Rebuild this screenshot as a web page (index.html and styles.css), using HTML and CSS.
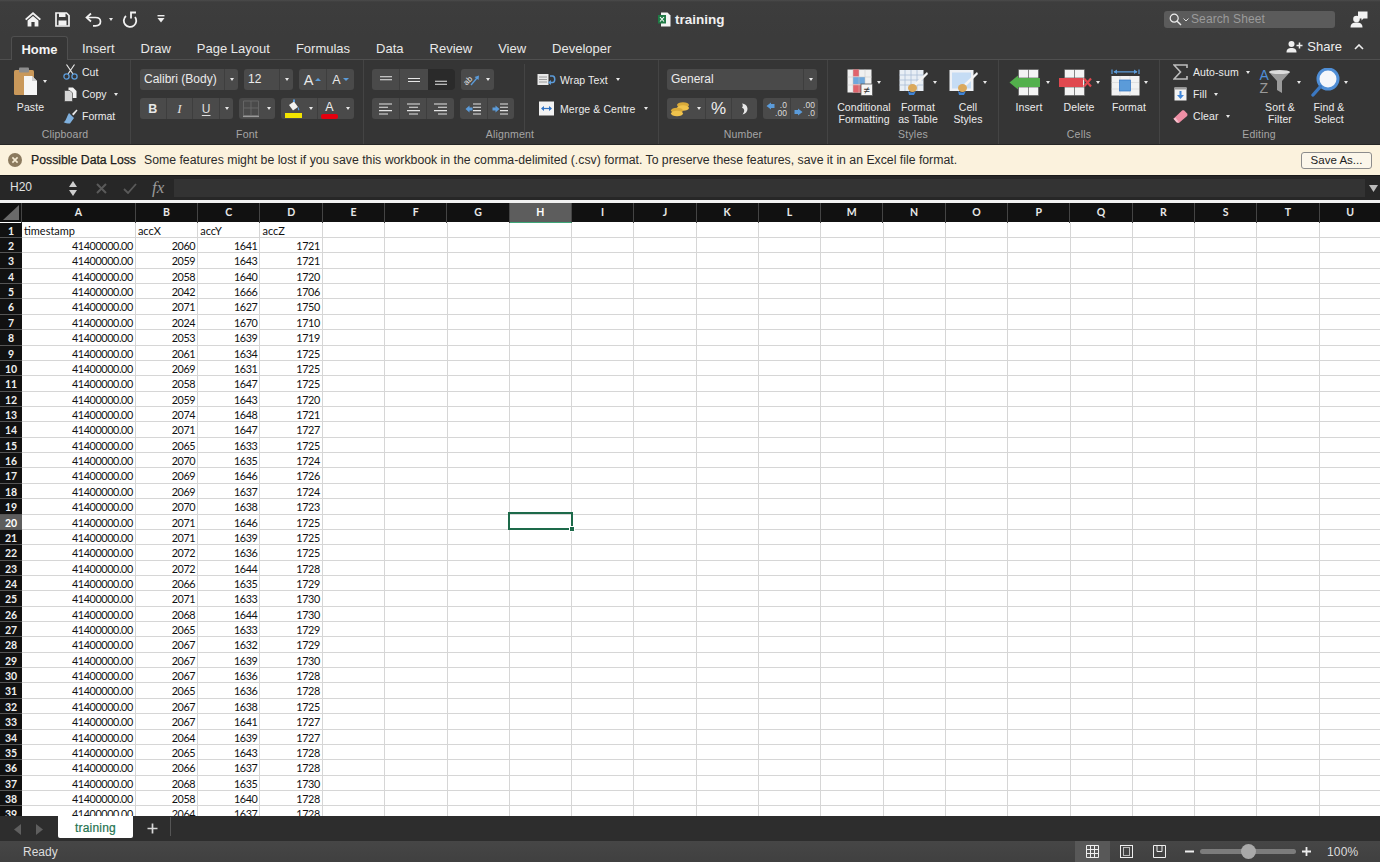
FILE: index.html
```html
<!DOCTYPE html>
<html lang="en">
<head>
<meta charset="utf-8">
<title>training</title>
<link rel="stylesheet" href="styles.css">
</head>
<body>
<div class="app">
  <header class="titlebar">
    <div class="qat">
      <svg class="q-home" width="18" height="16" viewBox="0 0 18 16"><path d="M9 1 L17 8 L15.6 9.3 L9 3.6 L2.4 9.3 L1 8Z" fill="#f2f2f2"/><path d="M3.6 9.6 L9 5 L14.4 9.6 V15.5 H10.6 V11 H7.4 V15.5 H3.6Z" fill="#f2f2f2"/></svg>
      <svg class="q-save" width="15" height="15" viewBox="0 0 15 15"><path d="M1 1 H11.5 L14 3.5 V14 H1Z" fill="none" stroke="#f2f2f2" stroke-width="1.7"/><rect x="4" y="1" width="6.5" height="4" fill="#f2f2f2"/><rect x="3.5" y="8.5" width="8" height="5" fill="#f2f2f2"/></svg>
      <svg class="q-undo" width="17" height="15" viewBox="0 0 17 15"><path d="M6 1.5 L1.5 5.5 L6 9.5" fill="none" stroke="#f2f2f2" stroke-width="1.7"/><path d="M2 5.5 H10.5 C14.5 5.5 15.5 8 15.5 9.5 C15.5 12 13.5 13.8 10.5 13.8 H8" fill="none" stroke="#f2f2f2" stroke-width="1.7"/></svg>
      <span class="caret q-caret"></span>
      <svg class="q-redo" width="16" height="17" viewBox="0 0 16 17"><path d="M4 5 A6.2 6.2 0 1 0 13 6" fill="none" stroke="#f2f2f2" stroke-width="1.8"/><path d="M14 1.5 H9 V7.5" fill="none" stroke="#f2f2f2" stroke-width="1.8"/></svg>
      <svg class="q-more" width="8" height="8" viewBox="0 0 8 8"><rect x="0.5" y="0" width="7" height="1.4" fill="#eee"/><path d="M0.5 3 H7.5 L4 7.5Z" fill="#eee"/></svg>
    </div>
    <div class="doc">
      <svg width="13" height="15" viewBox="0 0 13 15"><path d="M3 0.5 H9.5 L12.5 3.5 V14.5 H3Z" fill="#f4f4f4"/><rect x="0" y="3" width="8" height="8.5" fill="#1f7a45"/><path d="M2 5 L6 9.5 M6 5 L2 9.5" stroke="#fff" stroke-width="1.1"/></svg>
      <span class="doc-name">training</span>
    </div>
    <div class="search">
      <svg width="13" height="13" viewBox="0 0 13 13"><circle cx="5.2" cy="5.2" r="4" fill="none" stroke="#eee" stroke-width="1.2"/><path d="M8.2 8.2 L12 12" stroke="#eee" stroke-width="1.4"/></svg>
      <svg class="chev" width="6" height="4" viewBox="0 0 6 4"><path d="M0.5 0.5 L3 3 L5.5 0.5" fill="none" stroke="#ddd" stroke-width="1"/></svg>
      <span>Search Sheet</span>
    </div>
    <svg class="people" width="18" height="17" viewBox="0 0 18 17"><path d="M8 0.5 H17.5 V7.5 H13.5 L11.5 9.5 V7.5 H8Z" fill="#f2f2f2"/><circle cx="6.5" cy="8" r="3.3" fill="#f2f2f2"/><path d="M0.5 16.5 C0.5 12.5 3 11.5 6.5 11.5 C10 11.5 12.5 12.5 12.5 16.5Z" fill="#f2f2f2"/></svg>
  </header>

  <nav class="tabs">
    <span class="tab active">Home</span>
    <span class="tab">Insert</span>
    <span class="tab">Draw</span>
    <span class="tab">Page Layout</span>
    <span class="tab">Formulas</span>
    <span class="tab">Data</span>
    <span class="tab">Review</span>
    <span class="tab">View</span>
    <span class="tab">Developer</span>
    <span class="share">
      <svg width="17" height="13" viewBox="0 0 17 13"><circle cx="5.5" cy="4" r="3" fill="#eee"/><path d="M0.5 12.5 C0.5 9 2.5 8 5.5 8 C8.5 8 10.5 9 10.5 12.5Z" fill="#eee"/><path d="M10.5 5.5 H16.5 M13.5 2.5 V8.5" stroke="#eee" stroke-width="1.5"/></svg>
      Share
      <svg class="collapse" width="10" height="6" viewBox="0 0 10 6"><path d="M1 5 L5 1 L9 5" fill="none" stroke="#eee" stroke-width="1.6"/></svg>
    </span>
  </nav>

  <section class="ribbon">
    <div class="group g-clip">
      <div class="body clip-body">
        <div class="paste">
          <div class="paste-top">
            <svg width="25" height="29" viewBox="0 0 25 29"><rect x="1" y="3" width="20" height="25" rx="1.5" fill="#c9985a"/><rect x="6" y="0.5" width="10" height="5" rx="1" fill="#8d8d8d"/><path d="M11 9 H19 L24 14 V28 H11Z" fill="#f6f6f6"/><path d="M19 9 V14 H24" fill="#cfcfcf"/></svg>
            <span class="caret"></span>
          </div>
          <span class="lbl">Paste</span>
        </div>
        <div class="clip-list">
          <div class="clip-item">
            <svg width="15" height="16" viewBox="0 0 15 16"><path d="M3.5 0.5 L10 10 M11.5 0.5 L5 10" stroke="#e5e5e5" stroke-width="1.2"/><circle cx="3.5" cy="12.5" r="2.6" fill="none" stroke="#5b9bd9" stroke-width="1.3"/><circle cx="11.5" cy="12.5" r="2.6" fill="none" stroke="#5b9bd9" stroke-width="1.3"/></svg>
            <span>Cut</span>
          </div>
          <div class="clip-item">
            <svg width="13" height="15" viewBox="0 0 13 15"><path d="M4.5 0.5 H9 L12.5 4 V11 H4.5Z" fill="#f2f2f2"/><path d="M0.5 3.5 H6 L8.5 6 V14.5 H0.5Z" fill="#d6d6d6" stroke="#333" stroke-width="0.6"/></svg>
            <span>Copy</span><span class="caret"></span>
          </div>
          <div class="clip-item">
            <svg width="15" height="15" viewBox="0 0 15 15"><path d="M9 5 L13.5 0.5 L14.5 1.5 L10.5 6.5Z" fill="#e9e9e9"/><path d="M6 4 L11 9 L7 14.5 C4 14.5 2 14 0.5 13 C3 12.5 3.5 8 6 4Z" fill="#7fb0dd"/></svg>
            <span>Format</span>
          </div>
        </div>
      </div>
      <div class="glabel">Clipboard</div>
    </div>

    <div class="group g-font">
      <div class="body rows">
        <div class="row">
          <div class="seg w-fontname"><span class="seg-text grow">Calibri (Body)</span><span class="divider"></span><span class="caret-box"><span class="caret"></span></span></div>
          <div class="seg w-fontsize"><span class="seg-text grow">12</span><span class="divider"></span><span class="caret-box"><span class="caret"></span></span></div>
          <div class="seg w-grow">
            <span class="cell-btn"><span class="big-a">A</span><span class="tri-up"></span></span>
            <span class="divider"></span>
            <span class="cell-btn"><span class="small-a">A</span><span class="tri-down"></span></span>
          </div>
        </div>
        <div class="row">
          <div class="seg w-biu">
            <span class="cell-btn b">B</span><span class="divider"></span>
            <span class="cell-btn i">I</span><span class="divider"></span>
            <span class="cell-btn u">U</span><span class="divider"></span>
            <span class="caret-box"><span class="caret"></span></span>
          </div>
          <div class="seg w-border">
            <span class="cell-btn">
              <svg width="18" height="18" viewBox="0 0 18 18"><path d="M1.5 1 V15 M16.5 1 V15 M1.5 1 H16.5 M1.5 8 H16.5 M9 1 V15" fill="none" stroke="#696969" stroke-width="0.9"/><rect x="1" y="15.5" width="16" height="1.6" fill="#9a9a9a"/></svg>
            </span>
            <span class="caret-box"><span class="caret"></span></span>
          </div>
          <div class="seg w-color">
            <span class="cell-btn">
              <svg width="18" height="19" viewBox="0 0 18 19"><path d="M5 6 L10 2.5 L14 8 L9 11.5Z" fill="#f2f2f2"/><path d="M10 3 V0.5" stroke="#5b9bd9" stroke-width="2"/><path d="M14 8 C15.5 9 15.5 11 15 11.5 C14 11.5 13.5 10 14 8Z" fill="#5b9bd9"/><rect x="1" y="14" width="17" height="5" fill="#f2e400"/></svg>
            </span>
            <span class="caret-box"><span class="caret"></span></span>
            <span class="divider"></span>
            <span class="cell-btn color-a"><span class="a-letter">A</span><span class="red-bar"></span></span>
            <span class="caret-box"><span class="caret"></span></span>
          </div>
        </div>
      </div>
      <div class="glabel">Font</div>
    </div>

    <div class="group g-align">
      <div class="body align-body">
        <div class="rows">
          <div class="row">
            <div class="seg w-valign">
              <span class="cell-btn"><svg width="14" height="8" viewBox="0 0 14 8"><path d="M1 0.7 H13 M1 3.7 H13" stroke="#e8e8e8" stroke-width="1.1"/></svg></span>
              <span class="divider"></span>
              <span class="cell-btn"><svg width="14" height="8" viewBox="0 0 14 8"><path d="M1 2.5 H13 M1 5.5 H13" stroke="#e8e8e8" stroke-width="1.1"/></svg></span>
              <span class="cell-btn dark"><svg class="lower" width="14" height="8" viewBox="0 0 14 8"><path d="M1 4.3 H13 M1 7.3 H13" stroke="#e8e8e8" stroke-width="1.1"/></svg></span>
            </div>
            <div class="seg w-orient">
              <span class="cell-btn"><svg width="20" height="18" viewBox="0 0 20 18"><text x="2" y="12" class="ab" transform="rotate(-45 7 9)">ab</text><path d="M10 14 L16 7" stroke="#5b9bd9" stroke-width="1.3"/><path d="M13.5 6 L18 4.5 L17.5 9Z" fill="#5b9bd9"/></svg></span>
              <span class="caret-box"><span class="caret"></span></span>
            </div>
          </div>
          <div class="row">
            <div class="seg w-halign">
              <span class="cell-btn"><svg width="15" height="12" viewBox="0 0 15 12"><path d="M1 1 H14 M1 4.3 H10 M1 7.6 H14 M1 11 H10" stroke="#e4e4e4" stroke-width="1.1"/></svg></span>
              <span class="divider"></span>
              <span class="cell-btn"><svg width="15" height="12" viewBox="0 0 15 12"><path d="M1 1 H14 M3 4.3 H12 M1 7.6 H14 M3 11 H12" stroke="#e4e4e4" stroke-width="1.1"/></svg></span>
              <span class="divider"></span>
              <span class="cell-btn"><svg width="15" height="12" viewBox="0 0 15 12"><path d="M1 1 H14 M5 4.3 H14 M1 7.6 H14 M5 11 H14" stroke="#e4e4e4" stroke-width="1.1"/></svg></span>
            </div>
            <div class="seg w-indent">
              <span class="cell-btn"><svg width="17" height="12" viewBox="0 0 17 12"><path d="M8 1 H16 M8 4.3 H16 M8 7.6 H16 M8 11 H16" stroke="#e4e4e4" stroke-width="1.1"/><path d="M0.5 6 L4.5 2.5 V4.5 H7.5 V7.5 H4.5 V9.5Z" fill="#5b9bd9"/></svg></span>
              <span class="divider"></span>
              <span class="cell-btn"><svg width="17" height="12" viewBox="0 0 17 12"><path d="M8 1 H16 M8 4.3 H16 M8 7.6 H16 M8 11 H16" stroke="#e4e4e4" stroke-width="1.1"/><path d="M7.5 6 L3.5 2.5 V4.5 H0.5 V7.5 H3.5 V9.5Z" fill="#5b9bd9"/></svg></span>
            </div>
          </div>
        </div>
        <div class="wrap-col">
          <div class="wrap-item">
            <svg width="19" height="13" viewBox="0 0 19 13"><rect x="0.5" y="1" width="11" height="11" fill="#e8e8e8"/><path d="M2 4 H10 M2 6.5 H10 M2 9 H10" stroke="#888" stroke-width="0.8"/><path d="M13 3 H15.5 C18.5 3 18.5 9.5 15.5 9.5 H12" fill="none" stroke="#5b9bd9" stroke-width="1.5"/><path d="M14 7 L11 9.5 L14 12Z" fill="#5b9bd9"/></svg>
            <span>Wrap Text</span><span class="caret"></span>
          </div>
          <div class="wrap-item">
            <svg width="19" height="15" viewBox="0 0 19 15"><rect x="2" y="0.5" width="15" height="14" fill="#f2f2f2"/><path d="M5 7.5 H14" stroke="#2f72c4" stroke-width="1.2"/><path d="M7 5 L4 7.5 L7 10Z M12 5 L15 7.5 L12 10Z" fill="#2f72c4"/></svg>
            <span>Merge &amp; Centre</span><span class="caret"></span>
          </div>
        </div>
      </div>
      <div class="glabel">Alignment</div>
    </div>

    <div class="group g-num">
      <div class="body rows">
        <div class="row"><div class="seg w-general"><span class="seg-text grow">General</span><span class="divider"></span><span class="caret-box"><span class="caret"></span></span></div></div>
        <div class="row">
          <div class="seg w-money">
            <span class="cell-btn">
              <svg width="20" height="16" viewBox="0 0 20 16"><ellipse cx="13" cy="4" rx="6" ry="2.8" fill="#d9aa3a"/><ellipse cx="13" cy="7" rx="6" ry="2.8" fill="#f0c34c"/><ellipse cx="7" cy="9.5" rx="6" ry="2.8" fill="#d9aa3a"/><ellipse cx="7" cy="12.5" rx="6" ry="2.8" fill="#f0c34c"/></svg>
            </span>
            <span class="caret-box"><span class="caret"></span></span>
            <span class="divider"></span>
            <span class="cell-btn pct">%</span>
            <span class="divider"></span>
            <span class="cell-btn">
              <svg width="7" height="12" viewBox="0 0 7 12"><path d="M1 0.5 C5 1 6.5 3.5 6.5 6 C6.5 8.5 4.5 11 1.5 11.5 C3 9.5 3.5 8 3 6.5 C2.5 5.5 1.5 5 1 4.5 C2 3.5 2 2 1 0.5Z" fill="#e8e8e8"/></svg>
            </span>
          </div>
          <div class="seg w-dec">
            <span class="cell-btn dec">
              <svg class="dec-up" width="9" height="8" viewBox="0 0 9 8"><path d="M0.5 4 L5 0.5 V2 H8.5 V6 H5 V7.5Z" fill="#5b9bd9"/></svg>
              <span class="dec-t"><i>.0</i><i>.00</i></span>
            </span>
            <span class="divider"></span>
            <span class="cell-btn dec">
              <span class="dec-t"><i>.00</i><i>.0</i></span>
              <svg class="dec-r" width="9" height="8" viewBox="0 0 9 8"><path d="M8.5 4 L4 0.5 V2 H0.5 V6 H4 V7.5Z" fill="#5b9bd9"/></svg>
            </span>
          </div>
        </div>
      </div>
      <div class="glabel">Number</div>
    </div>

    <div class="group g-styles">
      <div class="body bigs">
        <div class="big b-cond">
          <div class="big-icon">
            <svg width="26" height="27" viewBox="0 0 26 27"><rect x="0.5" y="0.5" width="24" height="23" fill="#f0f0f0"/><rect x="6" y="0.5" width="6" height="7" fill="#e0646c"/><rect x="6" y="8" width="12" height="7" fill="#6fa8dc"/><rect x="6" y="15.5" width="9" height="8" fill="#e0646c"/><path d="M6 0.5 V24 M12 0.5 V24 M18 0.5 V24 M0.5 8 H25 M0.5 16 H25" stroke="#c4c4c4" stroke-width="0.5"/><rect x="14" y="15" width="11.5" height="11.5" fill="#f6f6f6" stroke="#555" stroke-width="0.8"/><text x="16.5" y="24.5" class="neq">≠</text></svg>
            <span class="caret"></span>
          </div>
          <span class="lbl">Conditional<br>Formatting</span>
        </div>
        <div class="big b-table">
          <div class="big-icon">
            <svg width="30" height="27" viewBox="0 0 30 27"><rect x="0.5" y="1" width="24" height="21" fill="#e8eef5"/><path d="M0.5 6 H24 M0.5 11 H24 M0.5 16 H24 M6 1 V22 M12 1 V22 M18 1 V22" stroke="#a9bdd6" stroke-width="0.8"/><path d="M28 3 L15 15 L17 17 L29 5Z" fill="#f4f4f4"/><ellipse cx="13.5" cy="19" rx="4.5" ry="4" fill="#dba95c"/><path d="M9 22 C12 24 14 24 17 22 L15 26 H10Z" fill="#3f85d8"/></svg>
            <span class="caret"></span>
          </div>
          <span class="lbl">Format<br>as Table</span>
        </div>
        <div class="big b-cell">
          <div class="big-icon">
            <svg width="30" height="27" viewBox="0 0 30 27"><rect x="0.5" y="1" width="24" height="21" fill="#eef1f5"/><rect x="3" y="3.5" width="19" height="16" fill="#c5dcf4"/><path d="M28 3 L15 15 L17 17 L29 5Z" fill="#f4f4f4"/><ellipse cx="13.5" cy="19" rx="4.5" ry="4" fill="#dba95c"/><path d="M9 22 C12 24 14 24 17 22 L15 26 H10Z" fill="#3f85d8"/></svg>
            <span class="caret"></span>
          </div>
          <span class="lbl">Cell<br>Styles</span>
        </div>
      </div>
      <div class="glabel">Styles</div>
    </div>

    <div class="group g-cells">
      <div class="body bigs">
        <div class="big b-ins">
          <div class="big-icon">
            <svg width="33" height="27" viewBox="0 0 33 27"><rect x="9.5" y="0.5" width="20" height="26" fill="#f3f3f3" stroke="#555" stroke-width="0.6"/><path d="M19.5 0.5 V27 M9.5 9 H30 M9.5 18 H30" stroke="#555" stroke-width="0.7"/><rect x="9" y="9" width="22" height="9" fill="#53b04c"/><path d="M0.5 13.5 L9 6.5 V20.5Z" fill="#53b04c"/></svg>
            <span class="caret"></span>
          </div>
          <span class="lbl">Insert</span>
        </div>
        <div class="big b-del">
          <div class="big-icon">
            <svg width="34" height="27" viewBox="0 0 34 27"><rect x="6.5" y="0.5" width="20" height="26" fill="#f3f3f3" stroke="#555" stroke-width="0.6"/><path d="M16.5 0.5 V27 M6.5 9 H27 M6.5 18 H27" stroke="#555" stroke-width="0.7"/><rect x="1" y="9" width="24" height="9" fill="#e0484f"/><path d="M26 9.5 L33 17.5 M33 9.5 L26 17.5" stroke="#e0484f" stroke-width="2.2"/></svg>
            <span class="caret"></span>
          </div>
          <span class="lbl">Delete</span>
        </div>
        <div class="big b-fmt">
          <div class="big-icon">
            <svg width="29" height="27" viewBox="0 0 29 27"><path d="M1 0.5 V5 M28 0.5 V5 M3 2.8 H26" stroke="#5b9bd9" stroke-width="1.2"/><path d="M6 0.5 L2.5 2.8 L6 5Z M23 0.5 L26.5 2.8 L23 5Z" fill="#5b9bd9"/><rect x="0.5" y="7" width="28" height="19.5" fill="#f2f2f2"/><path d="M9 7 V27 M19 7 V27 M0.5 13.5 H28 M0.5 20 H28" stroke="#d4d4d4" stroke-width="0.6"/><rect x="8.5" y="11" width="11" height="11" fill="#5b9bd9" stroke="#2f72c4" stroke-width="0.7"/></svg>
            <span class="caret"></span>
          </div>
          <span class="lbl">Format</span>
        </div>
      </div>
      <div class="glabel">Cells</div>
    </div>

    <div class="group g-edit">
      <div class="body edit-body">
        <div class="edit-list">
          <div class="edit-item">
            <svg width="15" height="16" viewBox="0 0 15 16"><path d="M14 4 V1 H1 L7.5 8 L1 15 H14 V12" fill="none" stroke="#bdbdbd" stroke-width="1.6"/></svg>
            <span>Auto-sum</span><span class="caret"></span>
          </div>
          <div class="edit-item">
            <svg width="15" height="14" viewBox="0 0 15 14"><rect x="1.5" y="0.5" width="12" height="13" fill="#f2f2f2"/><rect x="1.5" y="0.5" width="12" height="2" fill="#9a9a9a"/><path d="M7.5 4 V9" stroke="#3f85d8" stroke-width="2"/><path d="M4 8 H11 L7.5 12Z" fill="#3f85d8"/></svg>
            <span>Fill</span><span class="caret"></span>
          </div>
          <div class="edit-item">
            <svg width="17" height="15" viewBox="0 0 17 15"><path d="M0.5 10 L10 1 C11 0.3 12 0.3 13 1 L16 4 C16.6 5 16.6 6 16 7 L7 14.5 C6 14.8 5 14.8 4 14 Z" fill="#ef8fa5"/><path d="M0.5 10 L4 14 L7 14.5 L3 9Z" fill="#f6c2ce"/></svg>
            <span>Clear</span><span class="caret"></span>
          </div>
        </div>
        <div class="big b-sort">
          <div class="big-icon">
            <svg width="34" height="28" viewBox="0 0 34 28"><text x="0.5" y="11.5" class="az-a">A</text><text x="0.5" y="25" class="az-z">Z</text><path d="M10 4 H31 L23 13 V25 L18 22 V13Z" fill="#9b9b9b"/><ellipse cx="20.5" cy="4" rx="10.5" ry="2" fill="#dcdcdc"/></svg>
            <span class="caret"></span>
          </div>
          <span class="lbl">Sort &amp;<br>Filter</span>
        </div>
        <div class="big b-find">
          <div class="big-icon">
            <svg width="29" height="29" viewBox="0 0 29 29"><circle cx="17" cy="11" r="10" fill="#f4f6fa" stroke="#4f8ed6" stroke-width="3"/><path d="M9.5 18.5 L2 27" stroke="#3b78c2" stroke-width="3.4" stroke-linecap="round"/></svg>
            <span class="caret"></span>
          </div>
          <span class="lbl">Find &amp;<br>Select</span>
        </div>
      </div>
      <div class="glabel">Editing</div>
    </div>
  </section>

  <section class="msgbar">
    <svg width="14" height="14" viewBox="0 0 14 14"><circle cx="7" cy="7" r="7" fill="#8b7a5e"/><path d="M4.4 4.4 L9.6 9.6 M9.6 4.4 L4.4 9.6" stroke="#f6ecd4" stroke-width="1.6"/></svg>
    <b class="msg-title">Possible Data Loss</b>
    <span class="msg-text">Some features might be lost if you save this workbook in the comma-delimited (.csv) format. To preserve these features, save it in an Excel file format.</span>
    <span class="msg-btn">Save As...</span>
  </section>

  <section class="fbar">
    <span class="namebox">H20</span>
    <svg class="stepper" width="8" height="17" viewBox="0 0 8 17"><path d="M4 1 L8 7 H0Z" fill="#cfcfcf"/><path d="M4 16 L8 10 H0Z" fill="#cfcfcf"/></svg>
    <svg class="f-x" width="11" height="11" viewBox="0 0 11 11"><path d="M1 1 L10 10 M10 1 L1 10" stroke="#5a5a5a" stroke-width="2"/></svg>
    <svg class="f-c" width="14" height="11" viewBox="0 0 14 11"><path d="M1 6 L5 10 L13 1" fill="none" stroke="#5a5a5a" stroke-width="1.8"/></svg>
    <span class="fx">fx</span>
    <div class="finput"></div>
    <svg class="f-drop" width="9" height="7" viewBox="0 0 9 7"><path d="M0 0 H9 L4.5 7Z" fill="#bbb"/></svg>
  </section>

  <main class="sheet">
    <div class="colhead">
      <span class="corner"><svg width="20" height="19" viewBox="0 0 20 19"><path d="M19 2 V17 H3Z" fill="#6a6a6a"/></svg></span>
      <span>A</span><span>B</span><span>C</span><span>D</span><span>E</span><span>F</span><span>G</span><span class="sel">H</span><span>I</span><span>J</span><span>K</span><span>L</span><span>M</span><span>N</span><span>O</span><span>P</span><span>Q</span><span>R</span><span>S</span><span>T</span><span>U</span>
    </div>
    <div class="rowsgrid">
      <div class="r"><b>1</b><span class="t">timestamp</span><span class="t">accX</span><span class="t">accY</span><span class="t">accZ</span><span class="rest"></span></div>
      <div class="r"><b>2</b><span>41400000.00</span><span>2060</span><span>1641</span><span>1721</span><span class="rest"></span></div>
      <div class="r"><b>3</b><span>41400000.00</span><span>2059</span><span>1643</span><span>1721</span><span class="rest"></span></div>
      <div class="r"><b>4</b><span>41400000.00</span><span>2058</span><span>1640</span><span>1720</span><span class="rest"></span></div>
      <div class="r"><b>5</b><span>41400000.00</span><span>2042</span><span>1666</span><span>1706</span><span class="rest"></span></div>
      <div class="r"><b>6</b><span>41400000.00</span><span>2071</span><span>1627</span><span>1750</span><span class="rest"></span></div>
      <div class="r"><b>7</b><span>41400000.00</span><span>2024</span><span>1670</span><span>1710</span><span class="rest"></span></div>
      <div class="r"><b>8</b><span>41400000.00</span><span>2053</span><span>1639</span><span>1719</span><span class="rest"></span></div>
      <div class="r"><b>9</b><span>41400000.00</span><span>2061</span><span>1634</span><span>1725</span><span class="rest"></span></div>
      <div class="r"><b>10</b><span>41400000.00</span><span>2069</span><span>1631</span><span>1725</span><span class="rest"></span></div>
      <div class="r"><b>11</b><span>41400000.00</span><span>2058</span><span>1647</span><span>1725</span><span class="rest"></span></div>
      <div class="r"><b>12</b><span>41400000.00</span><span>2059</span><span>1643</span><span>1720</span><span class="rest"></span></div>
      <div class="r"><b>13</b><span>41400000.00</span><span>2074</span><span>1648</span><span>1721</span><span class="rest"></span></div>
      <div class="r"><b>14</b><span>41400000.00</span><span>2071</span><span>1647</span><span>1727</span><span class="rest"></span></div>
      <div class="r"><b>15</b><span>41400000.00</span><span>2065</span><span>1633</span><span>1725</span><span class="rest"></span></div>
      <div class="r"><b>16</b><span>41400000.00</span><span>2070</span><span>1635</span><span>1724</span><span class="rest"></span></div>
      <div class="r"><b>17</b><span>41400000.00</span><span>2069</span><span>1646</span><span>1726</span><span class="rest"></span></div>
      <div class="r"><b>18</b><span>41400000.00</span><span>2069</span><span>1637</span><span>1724</span><span class="rest"></span></div>
      <div class="r"><b>19</b><span>41400000.00</span><span>2070</span><span>1638</span><span>1723</span><span class="rest"></span></div>
      <div class="r"><b class="sel">20</b><span>41400000.00</span><span>2071</span><span>1646</span><span>1725</span><span class="rest"></span></div>
      <div class="r"><b>21</b><span>41400000.00</span><span>2071</span><span>1639</span><span>1725</span><span class="rest"></span></div>
      <div class="r"><b>22</b><span>41400000.00</span><span>2072</span><span>1636</span><span>1725</span><span class="rest"></span></div>
      <div class="r"><b>23</b><span>41400000.00</span><span>2072</span><span>1644</span><span>1728</span><span class="rest"></span></div>
      <div class="r"><b>24</b><span>41400000.00</span><span>2066</span><span>1635</span><span>1729</span><span class="rest"></span></div>
      <div class="r"><b>25</b><span>41400000.00</span><span>2071</span><span>1633</span><span>1730</span><span class="rest"></span></div>
      <div class="r"><b>26</b><span>41400000.00</span><span>2068</span><span>1644</span><span>1730</span><span class="rest"></span></div>
      <div class="r"><b>27</b><span>41400000.00</span><span>2065</span><span>1633</span><span>1729</span><span class="rest"></span></div>
      <div class="r"><b>28</b><span>41400000.00</span><span>2067</span><span>1632</span><span>1729</span><span class="rest"></span></div>
      <div class="r"><b>29</b><span>41400000.00</span><span>2067</span><span>1639</span><span>1730</span><span class="rest"></span></div>
      <div class="r"><b>30</b><span>41400000.00</span><span>2067</span><span>1636</span><span>1728</span><span class="rest"></span></div>
      <div class="r"><b>31</b><span>41400000.00</span><span>2065</span><span>1636</span><span>1728</span><span class="rest"></span></div>
      <div class="r"><b>32</b><span>41400000.00</span><span>2067</span><span>1638</span><span>1725</span><span class="rest"></span></div>
      <div class="r"><b>33</b><span>41400000.00</span><span>2067</span><span>1641</span><span>1727</span><span class="rest"></span></div>
      <div class="r"><b>34</b><span>41400000.00</span><span>2064</span><span>1639</span><span>1727</span><span class="rest"></span></div>
      <div class="r"><b>35</b><span>41400000.00</span><span>2065</span><span>1643</span><span>1728</span><span class="rest"></span></div>
      <div class="r"><b>36</b><span>41400000.00</span><span>2066</span><span>1637</span><span>1728</span><span class="rest"></span></div>
      <div class="r"><b>37</b><span>41400000.00</span><span>2068</span><span>1635</span><span>1730</span><span class="rest"></span></div>
      <div class="r"><b>38</b><span>41400000.00</span><span>2058</span><span>1640</span><span>1728</span><span class="rest"></span></div>
      <div class="r"><b>39</b><span>41400000.00</span><span>2064</span><span>1637</span><span>1728</span><span class="rest"></span></div>
      <div class="selbox"><i></i></div>
    </div>
  </main>

  <section class="sheetbar">
    <svg class="nav-l" width="7" height="11" viewBox="0 0 7 11"><path d="M7 0 V11 L0 5.5Z" fill="#5f5f5f"/></svg>
    <svg class="nav-r" width="7" height="11" viewBox="0 0 7 11"><path d="M0 0 V11 L7 5.5Z" fill="#5f5f5f"/></svg>
    <span class="stab">training</span>
    <svg class="add" width="11" height="11" viewBox="0 0 11 11"><path d="M5.5 0.5 V10.5 M0.5 5.5 H10.5" stroke="#d8d8d8" stroke-width="1.7"/></svg>
    <span class="sb-sep"></span>
  </section>

  <footer class="status">
    <span class="ready">Ready</span>
    <span class="view active">
      <svg width="13" height="13" viewBox="0 0 13 13"><path d="M0.5 0.5 H12.5 V12.5 H0.5Z M4.5 0.5 V12.5 M8.5 0.5 V12.5 M0.5 4.5 H12.5 M0.5 8.5 H12.5" fill="none" stroke="#eee" stroke-width="1"/></svg>
    </span>
    <span class="view">
      <svg width="13" height="13" viewBox="0 0 13 13"><rect x="0.5" y="0.5" width="12" height="12" fill="none" stroke="#eee"/><rect x="3.5" y="2.5" width="6" height="8" fill="none" stroke="#bbb"/></svg>
    </span>
    <span class="view">
      <svg width="13" height="13" viewBox="0 0 13 13"><path d="M0.5 0.5 V12.5 H12.5 V0.5 M0.5 0.5 H12.5 M4 0.5 V6.5 H9 V0.5" fill="none" stroke="#eee"/></svg>
    </span>
    <svg class="zm" width="9" height="3" viewBox="0 0 9 3"><rect width="9" height="2" y="0.5" fill="#eee"/></svg>
    <span class="slider"><i></i></span>
    <svg class="zp" width="9" height="9" viewBox="0 0 9 9"><path d="M4.5 0 V9 M0 4.5 H9" stroke="#eee" stroke-width="1.8"/></svg>
    <span class="zoomval">100%</span>
  </footer>
</div>
</body>
</html>
```
FILE: styles.css
```css
* { box-sizing: border-box; }
html, body { margin: 0; padding: 0; height: 100%; overflow: hidden; }
body { font-family: "Liberation Sans", Arial, sans-serif; color: #eee; background: #333; }
svg { display: block; flex: none; }
.app { width: 1380px; height: 862px; display: flex; flex-direction: column; overflow: hidden; }

.caret { display: inline-block; flex: none; width: 0; height: 0; border-left: 2.5px solid transparent; border-right: 2.5px solid transparent; border-top: 3.5px solid #e8e8e8; }

/* title bar */
.titlebar { height: 36px; padding-top: 2px; display: flex; align-items: center; background: linear-gradient(#4b4b4b 0, #3d3d3d 2px, #3b3b3b 100%); }
.qat { width: 640px; display: flex; align-items: center; padding-left: 24px; }
.q-save { margin-left: 13px; }
.q-undo { margin-left: 15px; }
.q-caret { margin-left: 7px; }
.q-redo { margin-left: 9px; }
.q-more { margin-left: 19px; }
.doc { width: 524px; display: flex; align-items: center; padding-left: 18px; gap: 4px; }
.doc-name { font-size: 13.5px; font-weight: 700; color: #f0f0f0; }
.search { width: 171px; height: 17px; background: #5b5b5b; border-radius: 3px; display: flex; align-items: center; padding-left: 5px; font-size: 12px; color: #9a9a9a; letter-spacing: 0.1px; }
.search .chev { margin: 1px 2px 0 1px; }
.people { margin-left: 15px; }

/* tabs */
.tabs { height: 24px; display: flex; align-items: stretch; padding-left: 11px; background: #3b3b3b; border-bottom: 1px solid #4f4f4f; font-size: 13px; }
.tab { display: flex; align-items: center; padding: 1px 13px 0; color: #e8e8e8; }
.tab.active { font-weight: 700; width: 57px; justify-content: center; padding: 1px 0 0; margin-right: 1px; color: #f4f4f4; background: #353535; border: 1px solid #4f4f4f; border-bottom: 0; border-radius: 3px 3px 0 0; height: 24px; }
.share { margin-left: auto; display: flex; align-items: center; gap: 3px; font-size: 13px; color: #eee; padding-right: 16px; margin-top: -2px; }
.share svg:first-child { margin-right: 1px; }
.collapse { margin-left: 9px; }

/* ribbon */
.ribbon { height: 85px; display: flex; background: #353535; border-bottom: 1px solid #262626; }
.group { display: flex; flex-direction: column; flex: none; padding-top: 9px; border-right: 1px solid #444; }
.body { flex: 1; min-height: 0; }
.glabel { height: 16px; margin-bottom: 2px; text-align: center; font-size: 10.5px; line-height: 16px; color: #a6a6a6; letter-spacing: 0.2px; }
.g-clip { width: 131px; }
.g-font { width: 233px; padding-left: 9px; }
.g-font .glabel { margin-left: -9px; }
.g-align { width: 295px; padding-left: 8px; }
.g-align .glabel { margin-left: -10px; }
.g-num { width: 169px; padding-left: 8px; }
.g-num .glabel { margin-left: -8px; }
.g-styles { width: 171px; }
.g-cells { width: 161px; }
.g-edit { flex: 1; border-right: 0; }
.g-edit .glabel { margin-right: 22px; }
.lbl { display: block; font-size: 10.5px; line-height: 11.5px; color: #ececec; text-align: center; letter-spacing: 0.1px; }

.clip-body { display: flex; padding-left: 13px; margin-top: -3px; }
.paste { width: 38px; }
.paste-top { display: flex; align-items: center; gap: 5px; height: 30px; margin-bottom: 6px; }
.paste .lbl { width: 35px; }
.clip-list { display: flex; flex-direction: column; gap: 6px; margin-left: 12px; margin-top: -2px; }
.clip-item { display: flex; align-items: center; height: 16px; font-size: 10.5px; gap: 4px; color: #ececec; }
.clip-item svg { width: 15px; }
.clip-item .caret { margin-left: 3px; }

.rows { display: flex; flex-direction: column; gap: 8px; }
.row { display: flex; gap: 6px; height: 21px; }
.seg { display: flex; align-items: center; height: 21px; background: #4a4a4a; border-radius: 3px; overflow: hidden; flex: none; }
.seg-text { padding: 0 0 2px 4px; font-size: 12px; color: #ececec; }
.grow { flex: 1; }
.divider { width: 1px; height: 21px; background: #3e3e3e; flex: none; }
.caret-box { width: 13px; height: 21px; display: flex; align-items: center; justify-content: center; flex: none; }
.cell-btn { flex: 1; height: 21px; display: flex; align-items: center; justify-content: center; min-width: 0; }
.cell-btn.dark { background: #2a2a2a; }
.lower { margin-top: 2px; }
.w-fontname { width: 98px; }
.w-fontsize { width: 49px; }
.w-grow { width: 55px; }
.w-biu { width: 93px; }
.w-border { width: 36px; }
.w-color { width: 73px; }
.big-a { font-size: 14.5px; color: #e8e8e8; }
.small-a { font-size: 12.5px; color: #e8e8e8; }
.tri-up { width: 0; height: 0; margin-left: 2px; border-left: 3px solid transparent; border-right: 3px solid transparent; border-bottom: 3px solid #5b9bd9; }
.tri-down { width: 0; height: 0; margin-left: 2px; border-left: 3px solid transparent; border-right: 3px solid transparent; border-top: 3px solid #5b9bd9; }
.b { font-size: 12.5px; font-weight: 700; color: #e8e8e8; }
.i { font-size: 13px; font-style: italic; font-family: "Liberation Serif", serif; color: #e0e0e0; }
.u { font-size: 12px; text-decoration: underline; text-underline-offset: 2px; color: #e0e0e0; }
.color-a { flex-direction: column; justify-content: flex-start; }
.a-letter { font-size: 12.5px; line-height: 14px; margin-top: 2px; color: #eee; }
.red-bar { width: 17px; height: 4.5px; background: #e4000f; border-radius: 2px; }
.ab { font: 8px "Liberation Sans", sans-serif; fill: #e8e8e8; }

.align-body { display: flex; }
.w-valign { width: 83px; }
.w-orient { width: 33px; }
.w-halign { width: 82px; }
.w-indent { width: 54px; }
.wrap-col { margin: -5px 0 0 10px; height: 75px; padding: 5px 0 0 12px; display: flex; flex-direction: column; gap: 8px; border-left: 1px solid #444; }
.wrap-item { display: flex; align-items: center; height: 21px; font-size: 10.5px; gap: 4px; color: #ececec; letter-spacing: 0.1px; white-space: nowrap; }
.wrap-item .caret { margin-left: 4px; }
.w-general { width: 150px; }
.w-money { width: 90px; }
.w-dec { width: 55px; }
.pct { font-size: 17px; color: #eee; }
.dec { gap: 0; align-items: center; }
.dec-t { display: flex; flex-direction: column; font-size: 8.5px; line-height: 8px; color: #dcdcdc; text-align: right; }
.dec-t i { font-style: normal; }
.dec-up { margin: -6px 0 0 0; }
.dec-r { order: -1; margin-top: 6px; }

.bigs { display: flex; margin-top: -1px; }
.big { flex: none; display: flex; flex-direction: column; align-items: center; }
.big-icon { display: flex; align-items: center; height: 28px; gap: 4px; margin-bottom: 6px; }
.b-cond { width: 62px; margin-left: 5px; }
.b-table { width: 46px; }
.b-cell { width: 50px; margin-left: 2px; }
.b-ins { width: 50px; margin-left: 5px; }
.b-del { width: 50px; }
.b-fmt { width: 50px; }

.edit-body { display: flex; margin-top: -5px; }
.edit-list { display: flex; flex-direction: column; gap: 6px; width: 96px; padding-left: 13px; }
.edit-item { display: flex; align-items: center; height: 16px; font-size: 10.5px; gap: 5px; color: #ececec; letter-spacing: 0.1px; }
.edit-item svg { width: 15px; }
.edit-item .caret { margin-left: 2px; }
.b-sort { width: 48px; margin-top: 4px; }
.b-find { width: 50px; margin-top: 4px; }
.az-a { font: 14px "Liberation Sans", sans-serif; fill: #4f8ed6; }
.az-z { font: 14px "Liberation Sans", sans-serif; fill: #9a9a9a; }
.neq { font: 11px "Liberation Sans", sans-serif; fill: #333; }

/* message bar */
.msgbar { height: 30px; display: flex; align-items: center; padding: 0 8px; background: #fbf2dd; color: #222; font-size: 12.28px; }
.msg-title { font-weight: 400; margin-left: 9px; color: #1c1c1c; -webkit-text-stroke: 0.25px #1c1c1c; }
.msg-text { margin-left: 8px; color: #2b2b2b; white-space: nowrap; }
.msg-btn { margin-left: auto; width: 71px; height: 17px; text-align: center; line-height: 15px; border: 1px solid #8c8c8c; border-radius: 3px; background: #fbf6ea; color: #222; font-size: 11.5px; }

/* formula bar */
.fbar { height: 25px; display: flex; align-items: center; background: #272727; border-top: 1px solid #1a1a1a; }
.namebox { width: 69px; padding: 0 0 2px 10px; font-size: 12px; color: #e2e2e2; }
.stepper { margin-right: 19px; }
.f-c { margin-left: 16px; }
.fx { margin-left: 15px; font: italic 17px "Liberation Serif", serif; color: #9a9a9a; width: 22px; }
.finput { width: 1191px; height: 18px; background: #333; }
.f-drop { margin-left: 4px; }

/* sheet */
.sheet { height: 616px; flex: none; background: #fff; border-top: 3px solid #f2f2f2; overflow: hidden; }
.colhead { height: 19px; display: grid; grid-template-columns: 22px 113.9px repeat(20, 62.3px); background: #111; color: #e8e8e8; font: 700 10.5px/19px Lato, sans-serif; text-align: center; }
.colhead span { border-right: 1px solid #444; }
.colhead .sel { background: #5d5d5d; border-bottom: 1px solid #3fa77a; color: #fff; }
.rowsgrid { position: relative; height: 594px; padding-top: 0.7px; }
.r { height: 15.37px; display: grid; grid-template-columns: 22px 113.9px repeat(3, 62.3px) 1fr; font: 10.8px/16.3px Lato, sans-serif; color: #111; }
.r b { background: #111; color: #efefef; text-align: center; font-weight: 700; font-size: 10.5px; border-bottom: 1px solid #555; overflow: hidden; }
.r b.sel { background: #5d5d5d; color: #fff; }
.r span { text-align: right; padding-right: 2px; border-right: 1px solid #d6d6d6; border-bottom: 1px solid #d6d6d6; overflow: hidden; white-space: nowrap; letter-spacing: -0.38px; }
.r .t { text-align: left; padding-left: 2px; font-size: 11px; letter-spacing: 0; }
.r .rest { background: repeating-linear-gradient(to right, #fff 0, #fff 61.3px, #d6d6d6 61.3px, #d6d6d6 62.3px); border-right: 0; }
.selbox { position: absolute; left: 508px; top: 290.4px; width: 65px; height: 18px; border: 2px solid #1d6a4a; }
.selbox i { position: absolute; right: -4px; bottom: -4px; width: 6px; height: 6px; background: #1d6a4a; border: 1px solid #fff; }

/* sheet bar */
.sheetbar { height: 25px; flex: none; display: flex; align-items: flex-start; background: #2d2d2d; }
.nav-l { margin: 8px 0 0 14px; }
.nav-r { margin: 8px 0 0 15px; }
.stab { margin-left: 15px; width: 75px; height: 22px; background: #fff; color: #1f7350; font-size: 12px; text-align: center; line-height: 24px; -webkit-text-stroke: 0.2px #1f7350; border-radius: 0 0 2px 2px; letter-spacing: 0.2px; }
.add { margin: 7px 0 0 14px; }
.sb-sep { width: 1px; height: 19px; margin: 1px 0 0 12px; background: #555; }

/* status */
.status { flex: 1; display: flex; align-items: center; background: linear-gradient(#464646, #404040); font-size: 12px; color: #ddd; }
.ready { width: 1075px; padding: 1px 0 0 23px; }
.view { width: 35px; height: 100%; display: flex; align-items: center; justify-content: center; }
.view + .view { width: 33px; }
.view.active { background: #585858; }
.zm { margin-left: 9px; }
.slider { width: 96px; height: 5px; margin: 0 6px; background: #7c7c7c; border-radius: 3px; display: flex; align-items: center; }
.slider i { display: block; width: 15px; height: 15px; margin-left: 41px; border-radius: 50%; background: #a9a9a9; flex: none; }
.zoomval { margin-left: 16px; font-size: 12px; letter-spacing: 0.2px; }
```
